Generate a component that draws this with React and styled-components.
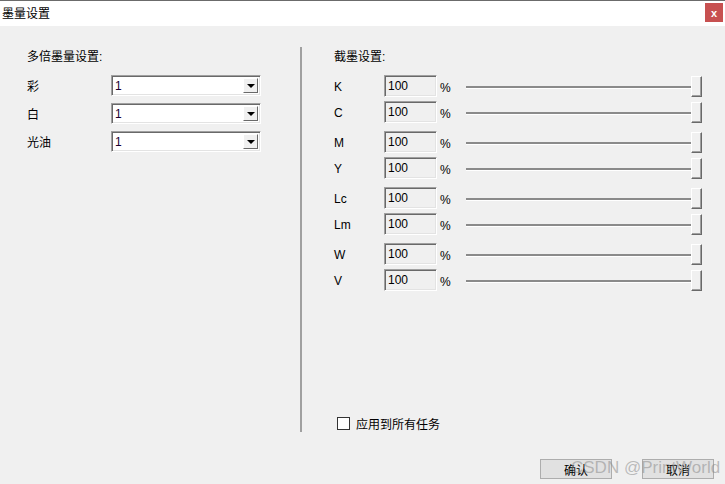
import React from 'react';
import styled, { createGlobalStyle } from 'styled-components';

const GlobalStyle = createGlobalStyle`
  html, body {
    margin: 0;
    padding: 0;
    background: #f0f0f0;
  }
  body {
    font-family: "Liberation Sans", "Noto Sans CJK SC", sans-serif;
    font-size: 12px;
    color: #000;
  }
`;

const Window = styled.div`
  position: relative;
  width: 725px;
  height: 484px;
  display: flex;
  flex-direction: column;
  overflow: hidden;
  background: #f0f0f0;
`;

const TitleBar = styled.div`
  height: 25px;
  border-top: 1px solid #6b6b6b;
  background: #fff;
  display: flex;
  align-items: center;
  justify-content: space-between;
  padding: 0 2px 0 2px;
`;

const Title = styled.span`
  font-size: 12px;
  line-height: 16px;
`;

const CloseButton = styled.div`
  width: 18px;
  height: 19px;
  margin-bottom: 2px;
  background: #c75050;
  color: #fff;
  font-weight: bold;
  font-size: 11px;
  display: flex;
  align-items: center;
  justify-content: center;
`;

const Main = styled.div`
  display: flex;
  height: 410px;
`;

const LeftPanel = styled.div`
  width: 300px;
  box-sizing: border-box;
  padding: 23px 0 0 27px;
`;

const SectionTitle = styled.div`
  height: 16px;
  line-height: 16px;
  margin-bottom: 10px;
`;

const ComboRow = styled.div`
  display: flex;
  align-items: center;
  height: 21px;
  margin-bottom: 7px;
`;

const ComboLabel = styled.span`
  width: 84px;
`;

const Combo = styled.div`
  width: 150px;
  height: 21px;
  box-sizing: border-box;
  display: flex;
  align-items: center;
  background: #fff;
  border: 1px solid;
  border-color: #a0a0a0 #fff #fff #a0a0a0;
  box-shadow: inset 1px 1px 0 #696969, inset -1px -1px 0 #e3e3e3;
`;

const ComboValue = styled.span`
  flex: 1;
  padding-left: 3px;
  color: #1a0030;
`;

const DropButton = styled.div`
  width: 15px;
  height: 15px;
  margin-right: 2px;
  box-sizing: border-box;
  background: #f0f0f0;
  border: 1px solid;
  border-color: #fff #696969 #696969 #fff;
  display: flex;
  align-items: center;
  justify-content: center;

  &::after {
    content: '';
    border-left: 4px solid transparent;
    border-right: 4px solid transparent;
    border-top: 4px solid #000;
  }
`;

const Divider = styled.div`
  width: 2px;
  height: 385px;
  margin-top: 21px;
  background: #a0a0a0;
`;

const RightPanel = styled.div`
  flex: 1;
  display: flex;
  flex-direction: column;
  padding: 23px 0 5px 32px;
`;

const RowGroup = styled.div`
  display: flex;
  flex-direction: column;
  gap: 4px;
  margin-bottom: 8px;
`;

const Row = styled.div`
  display: flex;
  align-items: center;
  height: 22px;
`;

const RowLabel = styled.span`
  width: 50px;
  padding-top: 1px;
`;

const ValueBox = styled.div`
  width: 53px;
  height: 22px;
  box-sizing: border-box;
  padding: 2px 0 0 3px;
  background: #f0f0f0;
  border: 1px solid;
  border-color: #a0a0a0 #fff #fff #a0a0a0;
  box-shadow: inset 1px 1px 0 #696969, inset -1px -1px 0 #e3e3e3;
  line-height: 16px;
`;

const Percent = styled.span`
  width: 26px;
  margin-left: 3px;
  padding-top: 4px;
`;

const Slider = styled.div`
  width: 236px;
  display: flex;
  align-items: center;
`;

const Track = styled.div`
  flex: 1;
  height: 2px;
  margin-top: 2px;
  background: #8a8a8a;
  border-bottom: 1px solid #fff;
`;

const Thumb = styled.div`
  width: 11px;
  height: 21px;
  margin-left: -1px;
  box-sizing: border-box;
  background: #f0f0f0;
  border: 1px solid;
  border-color: #fff #696969 #696969 #fff;
  box-shadow: inset -1px -1px 0 #a0a0a0;
`;

const CheckRow = styled.label`
  margin-top: auto;
  display: flex;
  align-items: center;
  height: 16px;
  padding-left: 3px;
`;

const CheckBox = styled.span`
  width: 13px;
  height: 13px;
  box-sizing: border-box;
  background: #fff;
  border: 1px solid #333;
  margin-right: 6px;
`;

const Footer = styled.div`
  display: flex;
  justify-content: flex-end;
  gap: 30px;
  padding: 23px 11px 0 0;
`;

const Button = styled.div`
  width: 72px;
  height: 20px;
  box-sizing: border-box;
  background: #e1e1e1;
  border: 1px solid #adadad;
  display: flex;
  align-items: center;
  justify-content: center;
`;

const Watermark = styled.div`
  position: absolute;
  left: 571px;
  top: 458px;
  font-size: 17px;
  line-height: 20px;
  color: rgba(140, 140, 140, 0.55);
  pointer-events: none;
  white-space: nowrap;
`;

const combos = ['彩', '白', '光油'];
const channels = [['K', 'C'], ['M', 'Y'], ['Lc', 'Lm'], ['W', 'V']];

const App = () => {
  return (
    <>
      <GlobalStyle />
      <Window>
        <TitleBar>
          <Title>墨量设置</Title>
          <CloseButton>x</CloseButton>
        </TitleBar>
        <Main>
          <LeftPanel>
            <SectionTitle>多倍墨量设置:</SectionTitle>
            {combos.map((name) => (
              <ComboRow key={name}>
                <ComboLabel>{name}</ComboLabel>
                <Combo>
                  <ComboValue>1</ComboValue>
                  <DropButton />
                </Combo>
              </ComboRow>
            ))}
          </LeftPanel>
          <Divider />
          <RightPanel>
            <SectionTitle>截墨设置:</SectionTitle>
            {channels.map((pair) => (
              <RowGroup key={pair[0]}>
                {pair.map((ch) => (
                  <Row key={ch}>
                    <RowLabel>{ch}</RowLabel>
                    <ValueBox>100</ValueBox>
                    <Percent>%</Percent>
                    <Slider>
                      <Track />
                      <Thumb />
                    </Slider>
                  </Row>
                ))}
              </RowGroup>
            ))}
            <CheckRow>
              <CheckBox />
              应用到所有任务
            </CheckRow>
          </RightPanel>
        </Main>
        <Footer>
          <Button>确认</Button>
          <Button>取消</Button>
        </Footer>
        <Watermark>CSDN @PrintWorld</Watermark>
      </Window>
    </>
  );
};

export default App;
